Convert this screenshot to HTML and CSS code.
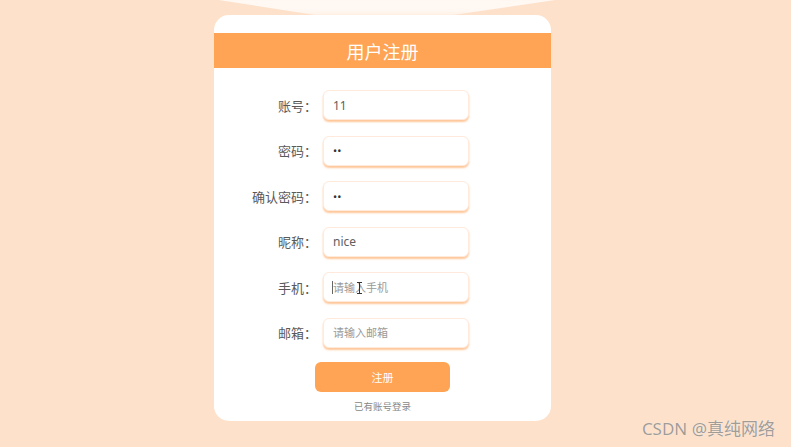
FILE: index.html
```html
<!DOCTYPE html>
<html lang="zh-CN">
<head>
<meta charset="utf-8">
<title>用户注册</title>
<link rel="stylesheet" href="styles.css">
</head>
<body>
<div class="glow"></div>
<main class="page">
  <section class="card">
    <h1 class="title">用户注册</h1>
    <form class="form">
      <label class="label">账号：</label>
      <input class="field" type="text" value="11">
      <label class="label">密码：</label>
      <input class="field pw" type="password" value="11">
      <label class="label">确认密码：</label>
      <input class="field pw" type="password" value="11">
      <label class="label">昵称：</label>
      <input class="field" type="text" value="nice">
      <label class="label">手机：</label>
      <div class="field-wrap">
        <input class="field focus" type="text" placeholder="请输入手机">
        <span class="caret"></span>
        <span class="ibeam"></span>
      </div>
      <label class="label">邮箱：</label>
      <input class="field" type="text" placeholder="请输入邮箱">
    </form>
    <button class="btn" type="button">注册</button>
    <p class="login">已有账号登录</p>
  </section>
</main>
<div class="watermark">CSDN @真纯网络</div>
</body>
</html>
```
FILE: styles.css
```css
html, body {
  margin: 0;
  padding: 0;
}
body {
  width: 791px;
  height: 447px;
  overflow: hidden;
  background: #fde1ca;
  font-family: "Noto Sans", "Noto Sans CJK SC", sans-serif;
  position: relative;
}
.glow {
  position: absolute;
  left: 180px;
  top: -6px;
  width: 416px;
  height: 22px;
  background: #fff8f3;
  clip-path: polygon(0 0, 100% 0, 64% 100%, 34% 100%);
  filter: blur(3px);
}
.page {
  padding: 15px 0 0 214px;
  position: relative;
}
.card {
  width: 337px;
  height: 406px;
  box-sizing: border-box;
  background: #fff;
  border-radius: 15px;
  padding-top: 18px;
}
.title {
  margin: 0;
  height: 35px;
  background: #ffa454;
  color: #fff;
  font-family: "Noto Sans CJK SC", sans-serif;
  font-weight: 400;
  font-size: 18px;
  display: flex;
  align-items: center;
  justify-content: center;
}
.form {
  display: grid;
  grid-template-columns: 102px 146px;
  grid-auto-rows: 30px;
  column-gap: 7px;
  row-gap: 15.5px;
  margin: 22px 0 0;
}
.label {
  justify-self: end;
  align-self: center;
  font-family: "Noto Sans CJK SC", sans-serif;
  font-size: 13px;
  color: #5a5a5a;
  margin-right: -1px;
}
.field-wrap {
  position: relative;
}
.field {
  box-sizing: border-box;
  width: 146px;
  height: 30px;
  border: 1px solid #ffeadb;
  border-radius: 6px;
  background: #fff;
  box-shadow: 0 2px 2px rgba(255, 160, 85, 0.6);
  padding: 0 9px;
  font-family: "Noto Sans", "Noto Sans CJK SC", sans-serif;
  font-size: 12px;
  color: #606060;
  outline: none;
}
.field::placeholder {
  font-family: "Noto Sans CJK SC", sans-serif;
  font-size: 11px;
  color: #9a9a9a;
}
.pw {
  font-size: 11px;
  color: #333;
}
.caret {
  position: absolute;
  left: 9px;
  top: 9px;
  width: 1px;
  height: 13px;
  background: #666;
}
.ibeam {
  position: absolute;
  left: 36px;
  top: 10px;
  width: 1px;
  height: 12px;
  background: #333;
}
.ibeam::before,
.ibeam::after {
  content: "";
  position: absolute;
  left: -2px;
  width: 5px;
  height: 1px;
  background: #333;
}
.ibeam::before {
  top: 0;
}
.ibeam::after {
  bottom: 0;
}
.btn {
  display: block;
  width: 135px;
  height: 30px;
  margin: 14px auto 0;
  padding: 0;
  border: none;
  border-radius: 6px;
  background: #ffa454;
  color: #fff;
  font-family: "Noto Sans CJK SC", sans-serif;
  font-size: 11px;
}
.login {
  margin: 7px 0 0;
  text-align: center;
  font-family: "Noto Sans CJK SC", sans-serif;
  font-size: 9.5px;
  line-height: 14px;
  color: #888;
}
.watermark {
  position: absolute;
  right: 16px;
  bottom: 7px;
  font-family: "Noto Sans", "Noto Sans CJK SC", sans-serif;
  font-size: 17px;
  color: #a29c97;
  text-shadow: 0 0 1px #fff;
}
```
